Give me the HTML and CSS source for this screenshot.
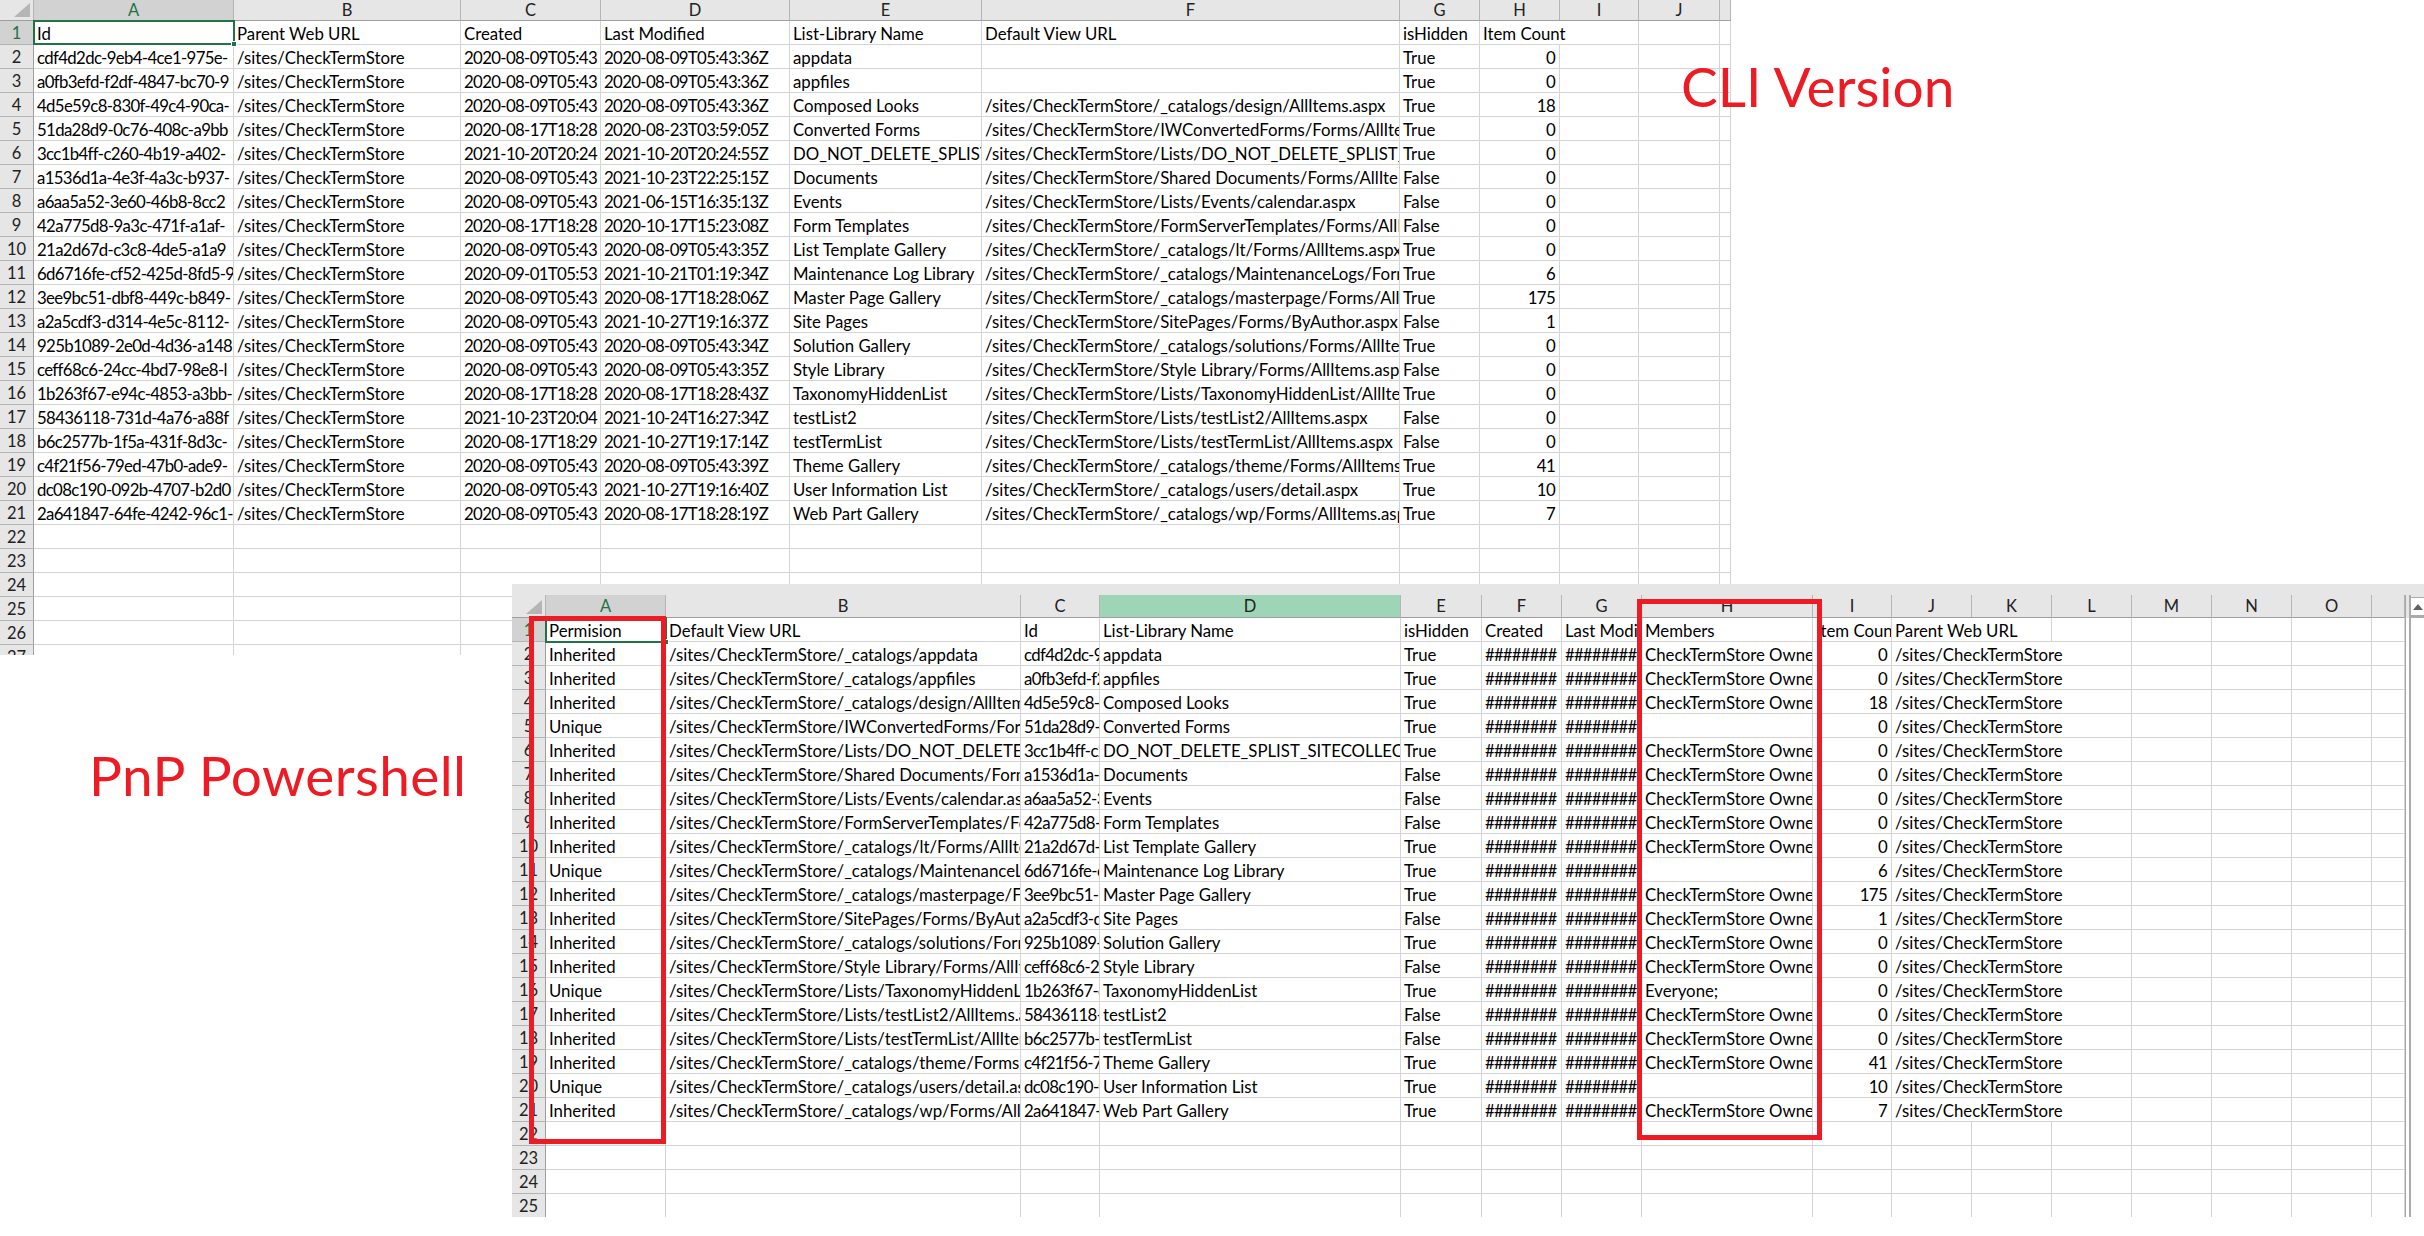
FILE: index.html
```html
<!DOCTYPE html>
<html lang="en">
<head>
<meta charset="utf-8">
<title>CLI Version and PnP Powershell exports</title>
<link rel="stylesheet" href="styles.css">
</head>
<body>
<main class="canvas">
<section class="sheet sheet-cli">
<table class="grid grid-cli">
<colgroup><col class="c34"><col class="c200"><col class="c227"><col class="c140"><col class="c189"><col class="c192"><col class="c418"><col class="c80"><col class="c80"><col class="c79"><col class="c81"><col class="c11"></colgroup>
<thead><tr><th class="corner"><svg class="tri" viewBox="0 0 16 14"><path d="M16 0V14H0Z"/></svg></th><th class="sel-col">A</th><th>B</th><th>C</th><th>D</th><th>E</th><th>F</th><th>G</th><th>H</th><th>I</th><th>J</th><th></th></tr></thead>
<tbody>
<tr><th class="sel-row">1</th><td>Id</td><td>Parent Web URL</td><td>Created</td><td>Last Modified</td><td>List-Library Name</td><td>Default View URL</td><td>isHidden</td><td colspan="2">Item Count</td><td></td><td></td></tr>
<tr><th>2</th><td>cdf4d2dc-9eb4-4ce1-975e-</td><td>/sites/CheckTermStore</td><td>2020-08-09T05:43</td><td>2020-08-09T05:43:36Z</td><td>appdata</td><td></td><td>True</td><td class="n">0</td><td></td><td></td><td></td></tr>
<tr><th>3</th><td>a0fb3efd-f2df-4847-bc70-9</td><td>/sites/CheckTermStore</td><td>2020-08-09T05:43</td><td>2020-08-09T05:43:36Z</td><td>appfiles</td><td></td><td>True</td><td class="n">0</td><td></td><td></td><td></td></tr>
<tr><th>4</th><td>4d5e59c8-830f-49c4-90ca-</td><td>/sites/CheckTermStore</td><td>2020-08-09T05:43</td><td>2020-08-09T05:43:36Z</td><td>Composed Looks</td><td>/sites/CheckTermStore/_catalogs/design/AllItems.aspx</td><td>True</td><td class="n">18</td><td></td><td></td><td></td></tr>
<tr><th>5</th><td>51da28d9-0c76-408c-a9bb</td><td>/sites/CheckTermStore</td><td>2020-08-17T18:28</td><td>2020-08-23T03:59:05Z</td><td>Converted Forms</td><td>/sites/CheckTermStore/IWConvertedForms/Forms/AllItems.aspx</td><td>True</td><td class="n">0</td><td></td><td></td><td></td></tr>
<tr><th>6</th><td>3cc1b4ff-c260-4b19-a402-</td><td>/sites/CheckTermStore</td><td>2021-10-20T20:24</td><td>2021-10-20T20:24:55Z</td><td>DO_NOT_DELETE_SPLIST_SITECOLLECTION</td><td>/sites/CheckTermStore/Lists/DO_NOT_DELETE_SPLIST_SITECOLLECTION</td><td>True</td><td class="n">0</td><td></td><td></td><td></td></tr>
<tr><th>7</th><td>a1536d1a-4e3f-4a3c-b937-</td><td>/sites/CheckTermStore</td><td>2020-08-09T05:43</td><td>2021-10-23T22:25:15Z</td><td>Documents</td><td>/sites/CheckTermStore/Shared Documents/Forms/AllItems.aspx</td><td>False</td><td class="n">0</td><td></td><td></td><td></td></tr>
<tr><th>8</th><td>a6aa5a52-3e60-46b8-8cc2</td><td>/sites/CheckTermStore</td><td>2020-08-09T05:43</td><td>2021-06-15T16:35:13Z</td><td>Events</td><td>/sites/CheckTermStore/Lists/Events/calendar.aspx</td><td>False</td><td class="n">0</td><td></td><td></td><td></td></tr>
<tr><th>9</th><td>42a775d8-9a3c-471f-a1af-</td><td>/sites/CheckTermStore</td><td>2020-08-17T18:28</td><td>2020-10-17T15:23:08Z</td><td>Form Templates</td><td>/sites/CheckTermStore/FormServerTemplates/Forms/AllItems.aspx</td><td>False</td><td class="n">0</td><td></td><td></td><td></td></tr>
<tr><th>10</th><td>21a2d67d-c3c8-4de5-a1a9</td><td>/sites/CheckTermStore</td><td>2020-08-09T05:43</td><td>2020-08-09T05:43:35Z</td><td>List Template Gallery</td><td>/sites/CheckTermStore/_catalogs/lt/Forms/AllItems.aspx</td><td>True</td><td class="n">0</td><td></td><td></td><td></td></tr>
<tr><th>11</th><td>6d6716fe-cf52-425d-8fd5-9</td><td>/sites/CheckTermStore</td><td>2020-09-01T05:53</td><td>2021-10-21T01:19:34Z</td><td>Maintenance Log Library</td><td>/sites/CheckTermStore/_catalogs/MaintenanceLogs/Forms/AllItems.aspx</td><td>True</td><td class="n">6</td><td></td><td></td><td></td></tr>
<tr><th>12</th><td>3ee9bc51-dbf8-449c-b849-</td><td>/sites/CheckTermStore</td><td>2020-08-09T05:43</td><td>2020-08-17T18:28:06Z</td><td>Master Page Gallery</td><td>/sites/CheckTermStore/_catalogs/masterpage/Forms/AllItems.aspx</td><td>True</td><td class="n">175</td><td></td><td></td><td></td></tr>
<tr><th>13</th><td>a2a5cdf3-d314-4e5c-8112-</td><td>/sites/CheckTermStore</td><td>2020-08-09T05:43</td><td>2021-10-27T19:16:37Z</td><td>Site Pages</td><td>/sites/CheckTermStore/SitePages/Forms/ByAuthor.aspx</td><td>False</td><td class="n">1</td><td></td><td></td><td></td></tr>
<tr><th>14</th><td>925b1089-2e0d-4d36-a148</td><td>/sites/CheckTermStore</td><td>2020-08-09T05:43</td><td>2020-08-09T05:43:34Z</td><td>Solution Gallery</td><td>/sites/CheckTermStore/_catalogs/solutions/Forms/AllItems.aspx</td><td>True</td><td class="n">0</td><td></td><td></td><td></td></tr>
<tr><th>15</th><td>ceff68c6-24cc-4bd7-98e8-l</td><td>/sites/CheckTermStore</td><td>2020-08-09T05:43</td><td>2020-08-09T05:43:35Z</td><td>Style Library</td><td>/sites/CheckTermStore/Style Library/Forms/AllItems.aspx</td><td>False</td><td class="n">0</td><td></td><td></td><td></td></tr>
<tr><th>16</th><td>1b263f67-e94c-4853-a3bb-</td><td>/sites/CheckTermStore</td><td>2020-08-17T18:28</td><td>2020-08-17T18:28:43Z</td><td>TaxonomyHiddenList</td><td>/sites/CheckTermStore/Lists/TaxonomyHiddenList/AllItems.aspx</td><td>True</td><td class="n">0</td><td></td><td></td><td></td></tr>
<tr><th>17</th><td>58436118-731d-4a76-a88f</td><td>/sites/CheckTermStore</td><td>2021-10-23T20:04</td><td>2021-10-24T16:27:34Z</td><td>testList2</td><td>/sites/CheckTermStore/Lists/testList2/AllItems.aspx</td><td>False</td><td class="n">0</td><td></td><td></td><td></td></tr>
<tr><th>18</th><td>b6c2577b-1f5a-431f-8d3c-</td><td>/sites/CheckTermStore</td><td>2020-08-17T18:29</td><td>2021-10-27T19:17:14Z</td><td>testTermList</td><td>/sites/CheckTermStore/Lists/testTermList/AllItems.aspx</td><td>False</td><td class="n">0</td><td></td><td></td><td></td></tr>
<tr><th>19</th><td>c4f21f56-79ed-47b0-ade9-</td><td>/sites/CheckTermStore</td><td>2020-08-09T05:43</td><td>2020-08-09T05:43:39Z</td><td>Theme Gallery</td><td>/sites/CheckTermStore/_catalogs/theme/Forms/AllItems.aspx</td><td>True</td><td class="n">41</td><td></td><td></td><td></td></tr>
<tr><th>20</th><td>dc08c190-092b-4707-b2d0</td><td>/sites/CheckTermStore</td><td>2020-08-09T05:43</td><td>2021-10-27T19:16:40Z</td><td>User Information List</td><td>/sites/CheckTermStore/_catalogs/users/detail.aspx</td><td>True</td><td class="n">10</td><td></td><td></td><td></td></tr>
<tr><th>21</th><td>2a641847-64fe-4242-96c1-</td><td>/sites/CheckTermStore</td><td>2020-08-09T05:43</td><td>2020-08-17T18:28:19Z</td><td>Web Part Gallery</td><td>/sites/CheckTermStore/_catalogs/wp/Forms/AllItems.aspx</td><td>True</td><td class="n">7</td><td></td><td></td><td></td></tr>
<tr><th>22</th><td></td><td></td><td></td><td></td><td></td><td></td><td></td><td></td><td></td><td></td><td></td></tr>
<tr><th>23</th><td></td><td></td><td></td><td></td><td></td><td></td><td></td><td></td><td></td><td></td><td></td></tr>
<tr><th>24</th><td></td><td></td><td></td><td></td><td></td><td></td><td></td><td></td><td></td><td></td><td></td></tr>
<tr><th>25</th><td></td><td></td><td></td><td></td><td></td><td></td><td></td><td></td><td></td><td></td><td></td></tr>
<tr><th>26</th><td></td><td></td><td></td><td></td><td></td><td></td><td></td><td></td><td></td><td></td><td></td></tr>
<tr><th>27</th><td></td><td></td><td></td><td></td><td></td><td></td><td></td><td></td><td></td><td></td><td></td></tr>
</tbody>
</table>
<div class="selection selection-cli"><span class="handle"></span></div>
</section>

<p class="label label-cli">CLI Version</p>
<p class="label label-pnp">PnP Powershell</p>

<section class="sheet sheet-pnp">
<div class="band"></div>
<div class="pnp-body">
<div class="pnp-grid">
<table class="grid grid-pnp">
<colgroup><col class="c34"><col class="c120"><col class="c355"><col class="c79"><col class="c301"><col class="c81"><col class="c80"><col class="c80"><col class="c171"><col class="c79"><col class="c80"><col class="c80"><col class="c80"><col class="c80"><col class="c80"><col class="c80"><col class="c33"></colgroup>
<thead><tr><th class="corner"><svg class="tri" viewBox="0 0 16 14"><path d="M16 0V14H0Z"/></svg></th><th class="sel-col">A</th><th>B</th><th>C</th><th class="hl-col">D</th><th>E</th><th>F</th><th>G</th><th>H</th><th>I</th><th>J</th><th>K</th><th>L</th><th>M</th><th>N</th><th>O</th><th></th></tr></thead>
<tbody>
<tr><th class="sel-row">1</th><td>Permision</td><td>Default View URL</td><td>Id</td><td>List-Library Name</td><td>isHidden</td><td>Created</td><td>Last Modified</td><td>Members</td><td>Item Count</td><td colspan="2">Parent Web URL</td><td></td><td></td><td></td><td></td><td></td></tr>
<tr><th>2</th><td>Inherited</td><td>/sites/CheckTermStore/_catalogs/appdata</td><td>cdf4d2dc-9eb4-4ce1-975e</td><td>appdata</td><td>True</td><td>########</td><td>########</td><td>CheckTermStore Owners;</td><td class="n">0</td><td colspan="3">/sites/CheckTermStore</td><td></td><td></td><td></td><td></td></tr>
<tr><th>3</th><td>Inherited</td><td>/sites/CheckTermStore/_catalogs/appfiles</td><td>a0fb3efd-f2df-4847-bc70</td><td>appfiles</td><td>True</td><td>########</td><td>########</td><td>CheckTermStore Owners;</td><td class="n">0</td><td colspan="3">/sites/CheckTermStore</td><td></td><td></td><td></td><td></td></tr>
<tr><th>4</th><td>Inherited</td><td>/sites/CheckTermStore/_catalogs/design/AllItems.aspx</td><td>4d5e59c8-830f-49c4</td><td>Composed Looks</td><td>True</td><td>########</td><td>########</td><td>CheckTermStore Owners;</td><td class="n">18</td><td colspan="3">/sites/CheckTermStore</td><td></td><td></td><td></td><td></td></tr>
<tr><th>5</th><td>Unique</td><td>/sites/CheckTermStore/IWConvertedForms/Forms/AllItems.aspx</td><td>51da28d9-0c76-408c</td><td>Converted Forms</td><td>True</td><td>########</td><td>########</td><td></td><td class="n">0</td><td colspan="3">/sites/CheckTermStore</td><td></td><td></td><td></td><td></td></tr>
<tr><th>6</th><td>Inherited</td><td>/sites/CheckTermStore/Lists/DO_NOT_DELETE_SPLIST</td><td>3cc1b4ff-c260-4b19</td><td>DO_NOT_DELETE_SPLIST_SITECOLLECTION</td><td>True</td><td>########</td><td>########</td><td>CheckTermStore Owners;</td><td class="n">0</td><td colspan="3">/sites/CheckTermStore</td><td></td><td></td><td></td><td></td></tr>
<tr><th>7</th><td>Inherited</td><td>/sites/CheckTermStore/Shared Documents/Forms/AllItems.aspx</td><td>a1536d1a-4e3f-4a3c</td><td>Documents</td><td>False</td><td>########</td><td>########</td><td>CheckTermStore Owners;</td><td class="n">0</td><td colspan="3">/sites/CheckTermStore</td><td></td><td></td><td></td><td></td></tr>
<tr><th>8</th><td>Inherited</td><td>/sites/CheckTermStore/Lists/Events/calendar.aspx</td><td>a6aa5a52-3e60-46b8</td><td>Events</td><td>False</td><td>########</td><td>########</td><td>CheckTermStore Owners;</td><td class="n">0</td><td colspan="3">/sites/CheckTermStore</td><td></td><td></td><td></td><td></td></tr>
<tr><th>9</th><td>Inherited</td><td>/sites/CheckTermStore/FormServerTemplates/Forms/AllItems.aspx</td><td>42a775d8-9a3c-471f</td><td>Form Templates</td><td>False</td><td>########</td><td>########</td><td>CheckTermStore Owners;</td><td class="n">0</td><td colspan="3">/sites/CheckTermStore</td><td></td><td></td><td></td><td></td></tr>
<tr><th>10</th><td>Inherited</td><td>/sites/CheckTermStore/_catalogs/lt/Forms/AllItems.aspx</td><td>21a2d67d-c3c8-4de5</td><td>List Template Gallery</td><td>True</td><td>########</td><td>########</td><td>CheckTermStore Owners;</td><td class="n">0</td><td colspan="3">/sites/CheckTermStore</td><td></td><td></td><td></td><td></td></tr>
<tr><th>11</th><td>Unique</td><td>/sites/CheckTermStore/_catalogs/MaintenanceLogs/Forms</td><td>6d6716fe-cf52-425d</td><td>Maintenance Log Library</td><td>True</td><td>########</td><td>########</td><td></td><td class="n">6</td><td colspan="3">/sites/CheckTermStore</td><td></td><td></td><td></td><td></td></tr>
<tr><th>12</th><td>Inherited</td><td>/sites/CheckTermStore/_catalogs/masterpage/Forms/AllItems.aspx</td><td>3ee9bc51-dbf8-449c</td><td>Master Page Gallery</td><td>True</td><td>########</td><td>########</td><td>CheckTermStore Owners;</td><td class="n">175</td><td colspan="3">/sites/CheckTermStore</td><td></td><td></td><td></td><td></td></tr>
<tr><th>13</th><td>Inherited</td><td>/sites/CheckTermStore/SitePages/Forms/ByAuthor.aspx</td><td>a2a5cdf3-d314-4e5c</td><td>Site Pages</td><td>False</td><td>########</td><td>########</td><td>CheckTermStore Owners;</td><td class="n">1</td><td colspan="3">/sites/CheckTermStore</td><td></td><td></td><td></td><td></td></tr>
<tr><th>14</th><td>Inherited</td><td>/sites/CheckTermStore/_catalogs/solutions/Forms/AllItems.aspx</td><td>925b1089-2e0d-4d36</td><td>Solution Gallery</td><td>True</td><td>########</td><td>########</td><td>CheckTermStore Owners;</td><td class="n">0</td><td colspan="3">/sites/CheckTermStore</td><td></td><td></td><td></td><td></td></tr>
<tr><th>15</th><td>Inherited</td><td>/sites/CheckTermStore/Style Library/Forms/AllItems.aspx</td><td>ceff68c6-24cc-4bd7</td><td>Style Library</td><td>False</td><td>########</td><td>########</td><td>CheckTermStore Owners;</td><td class="n">0</td><td colspan="3">/sites/CheckTermStore</td><td></td><td></td><td></td><td></td></tr>
<tr><th>16</th><td>Unique</td><td>/sites/CheckTermStore/Lists/TaxonomyHiddenList/AllItems.aspx</td><td>1b263f67-e94c-4853</td><td>TaxonomyHiddenList</td><td>True</td><td>########</td><td>########</td><td>Everyone;</td><td class="n">0</td><td colspan="3">/sites/CheckTermStore</td><td></td><td></td><td></td><td></td></tr>
<tr><th>17</th><td>Inherited</td><td>/sites/CheckTermStore/Lists/testList2/AllItems.aspx</td><td>58436118-731d-4a76</td><td>testList2</td><td>False</td><td>########</td><td>########</td><td>CheckTermStore Owners;</td><td class="n">0</td><td colspan="3">/sites/CheckTermStore</td><td></td><td></td><td></td><td></td></tr>
<tr><th>18</th><td>Inherited</td><td>/sites/CheckTermStore/Lists/testTermList/AllItems.aspx</td><td>b6c2577b-1f5a-431f</td><td>testTermList</td><td>False</td><td>########</td><td>########</td><td>CheckTermStore Owners;</td><td class="n">0</td><td colspan="3">/sites/CheckTermStore</td><td></td><td></td><td></td><td></td></tr>
<tr><th>19</th><td>Inherited</td><td>/sites/CheckTermStore/_catalogs/theme/Forms/AllItems.aspx</td><td>c4f21f56-79ed-47b0</td><td>Theme Gallery</td><td>True</td><td>########</td><td>########</td><td>CheckTermStore Owners;</td><td class="n">41</td><td colspan="3">/sites/CheckTermStore</td><td></td><td></td><td></td><td></td></tr>
<tr><th>20</th><td>Unique</td><td>/sites/CheckTermStore/_catalogs/users/detail.aspx</td><td>dc08c190-092b-4707</td><td>User Information List</td><td>True</td><td>########</td><td>########</td><td></td><td class="n">10</td><td colspan="3">/sites/CheckTermStore</td><td></td><td></td><td></td><td></td></tr>
<tr><th>21</th><td>Inherited</td><td>/sites/CheckTermStore/_catalogs/wp/Forms/AllItems.aspx</td><td>2a641847-64fe-4242</td><td>Web Part Gallery</td><td>True</td><td>########</td><td>########</td><td>CheckTermStore Owners;</td><td class="n">7</td><td colspan="3">/sites/CheckTermStore</td><td></td><td></td><td></td><td></td></tr>
<tr><th>22</th><td></td><td></td><td></td><td></td><td></td><td></td><td></td><td></td><td></td><td></td><td></td><td></td><td></td><td></td><td></td><td></td></tr>
<tr><th>23</th><td></td><td></td><td></td><td></td><td></td><td></td><td></td><td></td><td></td><td></td><td></td><td></td><td></td><td></td><td></td><td></td></tr>
<tr><th>24</th><td></td><td></td><td></td><td></td><td></td><td></td><td></td><td></td><td></td><td></td><td></td><td></td><td></td><td></td><td></td><td></td></tr>
<tr><th>25</th><td></td><td></td><td></td><td></td><td></td><td></td><td></td><td></td><td></td><td></td><td></td><td></td><td></td><td></td><td></td><td></td></tr>
</tbody>
</table>
<div class="selection selection-pnp"><span class="handle"></span></div>
</div>
<div class="gutter">
<div class="gutter-gap"></div>
<div class="vscroll"><div class="vscroll-btn"><svg class="arrow" viewBox="0 0 10 6"><path d="M5 0L10 6H0Z"/></svg></div></div>
</div>
</div>
</section>

<div class="redbox redbox-perm"></div>
<div class="redbox redbox-members"></div>
</main>
</body>
</html>
```
FILE: styles.css
```css
html, body {
  margin: 0;
  padding: 0;
  background: #fff;
}
body {
  width: 2424px;
  height: 1236px;
  overflow: hidden;
}
.canvas {
  position: relative;
  width: 2424px;
  height: 1236px;
  background: #fff;
  font-family: Lato, "Open Sans", sans-serif;
  color: #000;
}
.sheet-cli {
  position: relative;
  width: 1731px;
  height: 655px;
  overflow: hidden;
}
.sheet-pnp {
  position: absolute;
  left: 512px;
  top: 584px;
  width: 1912px;
  height: 633px;
  overflow: hidden;
  background: #fff;
}
.band {
  height: 11px;
  background: #e6e6e6;
}
.pnp-body {
  display: flex;
  height: 622px;
}
.pnp-grid {
  position: relative;
  width: 1894px;
  flex: none;
  overflow: hidden;
  border-right: 1px solid #a6a6a6;
  box-sizing: border-box;
  background: #fff;
}
.gutter {
  flex: 1;
  display: flex;
  align-items: flex-start;
  height: 100%;
}
.gutter-gap {
  width: 3px;
  height: 23px;
  background: #e6e6e6;
  flex: none;
}
.vscroll {
  flex: 1;
  height: 100%;
  border-left: 2px solid #ababab;
  background: linear-gradient(#e6e6e6 2px, #fff 2px);
}
.vscroll-btn {
  margin-top: 2px;
  height: 17px;
  display: flex;
  align-items: center;
  justify-content: center;
  background: #fff;
  border-top: 1px solid #ababab;
  border-bottom: 3px solid #ababab;
  box-sizing: content-box;
}
.arrow {
  width: 10px;
  height: 6px;
  fill: #606060;
}
.grid {
  border-collapse: separate;
  border-spacing: 0;
  table-layout: fixed;
  font-size: 16.8px;
  line-height: 18px;
}
.grid-cli { width: 1731px; }
.grid-pnp { width: 1893px; }
.c11 { width: 11px; }
.c33 { width: 33px; }
.c34 { width: 34px; }
.c79 { width: 79px; }
.c80 { width: 80px; }
.c81 { width: 81px; }
.c120 { width: 120px; }
.c140 { width: 140px; }
.c171 { width: 171px; }
.c189 { width: 189px; }
.c192 { width: 192px; }
.c200 { width: 200px; }
.c227 { width: 227px; }
.c301 { width: 301px; }
.c355 { width: 355px; }
.c418 { width: 418px; }
.grid thead th {
  height: 21px;
  padding: 0;
  box-sizing: border-box;
  background: #e6e6e6;
  border-right: 1px solid #b4b4b4;
  border-bottom: 1px solid #9f9f9f;
  font-weight: 400;
  font-size: 16.5px;
  text-align: center;
  color: #222;
}
.grid-pnp thead th { height: 23px; }
.grid thead th.corner {
  position: relative;
  text-align: right;
  vertical-align: bottom;
}
.tri {
  display: block;
  position: absolute;
  right: 3px;
  bottom: 3px;
  width: 16px;
  height: 14px;
  fill: #b5b5b5;
}
.grid thead th.sel-col {
  background: #d2d2d2;
  color: #217346;
}
.grid thead th.hl-col {
  background: #9fd5b7;
}
.grid tbody th {
  height: 24px;
  padding: 0;
  box-sizing: border-box;
  background: #e6e6e6;
  border-right: 1px solid #9f9f9f;
  border-bottom: 1px solid #b4b4b4;
  font-weight: 400;
  font-size: 16.5px;
  text-align: center;
  color: #222;
}
.grid tbody th.sel-row {
  background: #d2d2d2;
  color: #217346;
}
.grid td {
  height: 24px;
  box-sizing: border-box;
  padding: 2px 0 1px 3px;
  border-right: 1px solid #d4d4d4;
  border-bottom: 1px solid #d4d4d4;
  white-space: nowrap;
  overflow: hidden;
  vertical-align: bottom;
}
.grid td.n {
  text-align: right;
  padding-right: 4px;
  letter-spacing: -0.65px;
}
/* Digit-heavy columns: Lato figures run wider than the sheet font's. */
.grid-cli tbody tr:not(:first-child) td:nth-child(2),
.grid-cli tbody tr:not(:first-child) td:nth-child(4),
.grid-cli tbody tr:not(:first-child) td:nth-child(5),
.grid-pnp tbody tr:not(:first-child) td:nth-child(4) {
  letter-spacing: -0.65px;
}
.grid-pnp tbody tr:not(:first-child) td:nth-child(7),
.grid-pnp tbody tr:not(:first-child) td:nth-child(8) {
  letter-spacing: -0.8px;
}
.selection {
  position: absolute;
  box-sizing: border-box;
  border: 2px solid #217346;
}
.selection-cli {
  left: 33px;
  top: 20px;
  width: 202px;
  height: 25px;
}
.selection-pnp {
  left: 33px;
  top: 22px;
  width: 122px;
  height: 26px;
}
.handle {
  position: absolute;
  right: -4px;
  bottom: -4px;
  width: 6px;
  height: 6px;
  background: #217346;
  border: 1px solid #fff;
  box-sizing: border-box;
}
.label {
  position: absolute;
  margin: 0;
  color: #ed1c24;
  font-family: Lato, "Open Sans", sans-serif;
  font-size: 55px;
  line-height: 66px;
  white-space: nowrap;
}
.label-cli {
  left: 1681px;
  top: 53px;
}
.label-pnp {
  left: 89px;
  top: 742px;
  letter-spacing: 0.4px;
}
.redbox {
  position: absolute;
  box-sizing: border-box;
  border: 5px solid #ed1c24;
}
.redbox-perm {
  left: 529px;
  top: 616px;
  width: 137px;
  height: 528px;
}
.redbox-members {
  left: 1637px;
  top: 599px;
  width: 185px;
  height: 541px;
}
```
